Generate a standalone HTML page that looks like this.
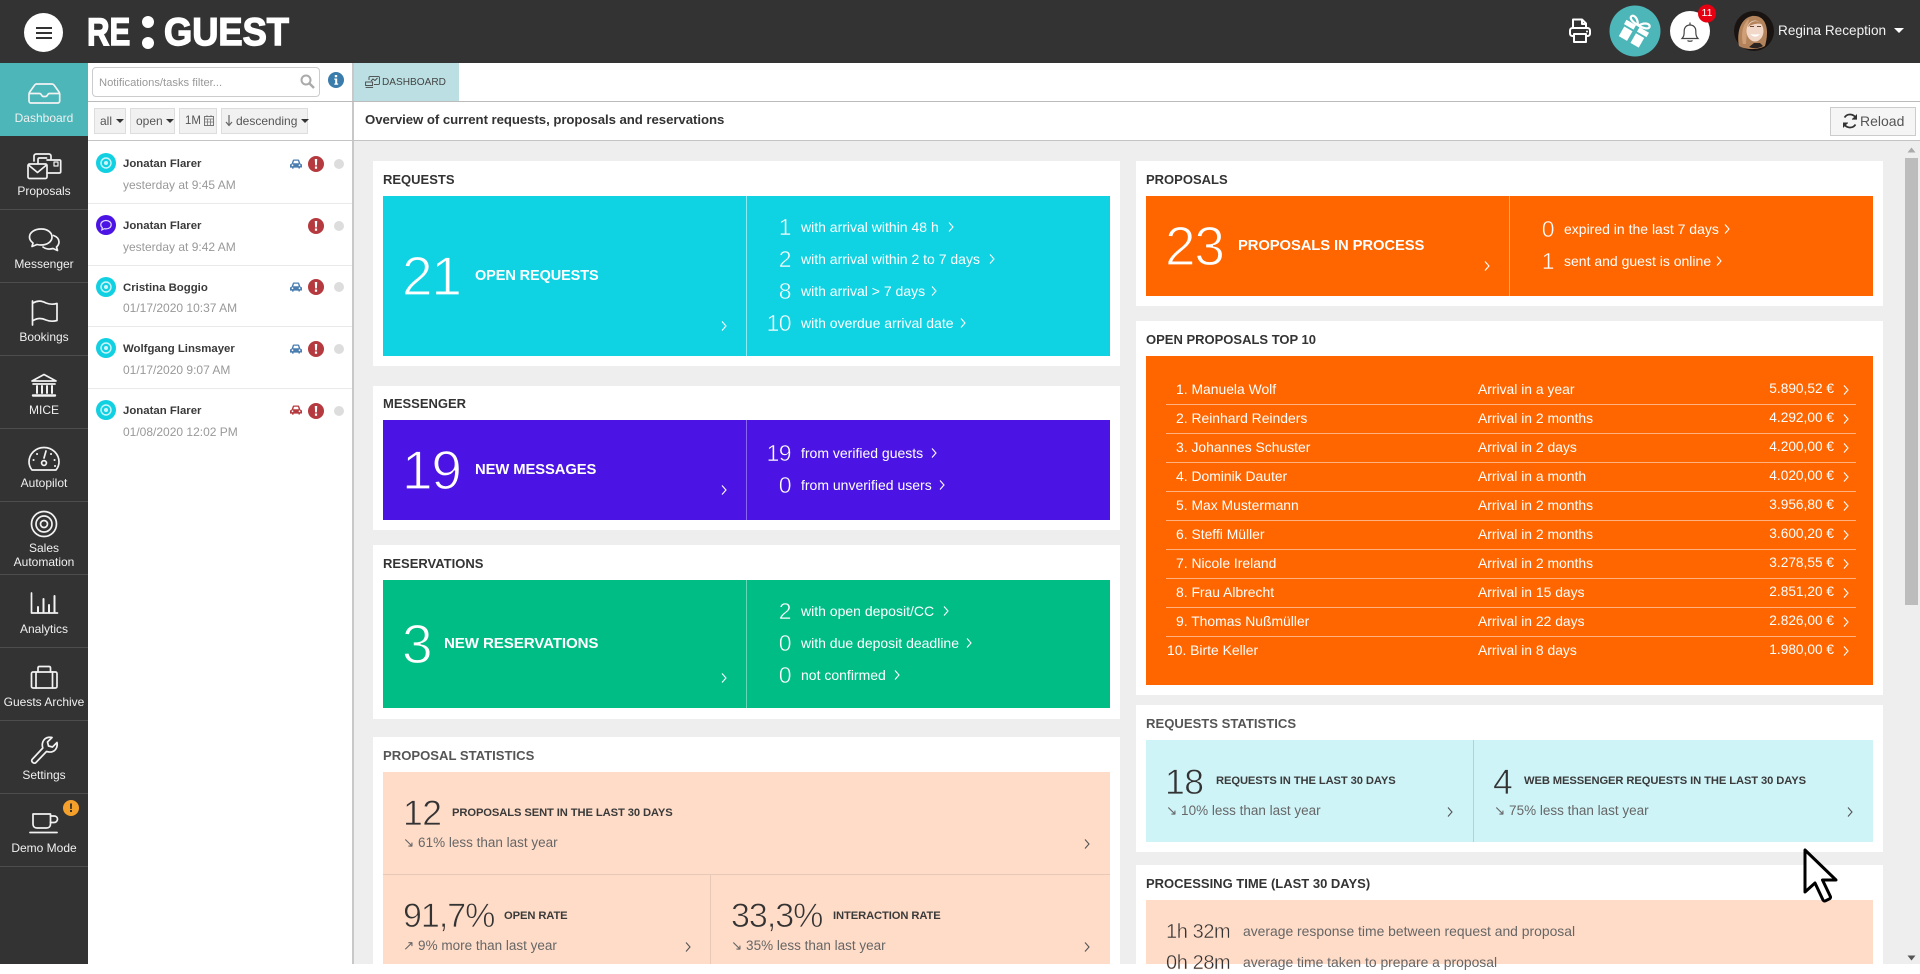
<!DOCTYPE html>
<html lang="en"><head><meta charset="utf-8"><title>RE:GUEST Dashboard</title>
<style>
*{box-sizing:border-box}
html,body{margin:0;padding:0;width:1920px;height:964px;overflow:hidden;background:#fff;font-family:"Liberation Sans",Arial,sans-serif;color:#333}
.b{position:absolute}
.t{position:absolute;white-space:nowrap;line-height:20px;margin-top:-10px}
.r{transform:translateX(-100%)}
.ct{transform:translateX(-50%)}
.bd{font-weight:700}
.card{position:absolute;background:#fff}
.ttl{font-size:13px;font-weight:700;color:#333}
.ttl2{font-size:13.1px;font-weight:700;color:#555}
.nav{font-size:12px;color:#f0f0f0;left:44px;margin-top:-9px}
.sep{position:absolute;left:0;width:88px;height:1px;background:#4d4d4d}
.nm{font-size:11.4px;font-weight:700;left:123px;color:#3a3a3a;margin-top:-9.5px}
.tm{font-size:12px;left:123px;color:#999}
.rowl{position:absolute;left:88px;width:264px;height:1px;background:#e9e9e9}
.btn{position:absolute;top:108px;height:26px;background:#f1f1f1;border:1px solid #ddd;font-size:12px;color:#555;line-height:24px;white-space:nowrap;padding-left:5px}
.w{color:#fff}
.big{font-size:55px;letter-spacing:-1.2px;color:#fff;margin-top:-9px}
.lab{font-size:14.8px;font-weight:700;color:#fff;letter-spacing:-.1px;margin-top:-9px}
.n{font-size:23px;color:#fff;letter-spacing:-.6px}
.s{font-size:14px;color:#fff}
.cy .n{-webkit-text-stroke:.5px #0fd3e3}.cy .big{-webkit-text-stroke:1.2px #0fd3e3}
.pu .n{-webkit-text-stroke:.5px #4b14e4}.pu .big{-webkit-text-stroke:1.2px #4b14e4}
.gr .n{-webkit-text-stroke:.5px #00bd86}.gr .big{-webkit-text-stroke:1.2px #00bd86}
.or .n{-webkit-text-stroke:.5px #ff6600}.or .big{-webkit-text-stroke:1.2px #ff6600}
.row{font-size:13.9px;color:#fff}
.amt{font-size:13.7px}
.hr{position:absolute;left:1166px;width:690px;height:1px;background:#ffb27f}
.sn{font-size:35.5px;color:#333;letter-spacing:-.5px;-webkit-text-stroke:.7px #ffdcc8}
.sc{-webkit-text-stroke:.7px #cff4f8}
.sl{font-size:11.2px;font-weight:700;color:#3a3a3a;letter-spacing:-.1px}
.ss{font-size:13.5px;color:#666}
.pt{font-size:13.9px;color:#666;margin-top:-9px}
svg.ic{position:absolute;overflow:visible}
</style></head><body>
<svg width="0" height="0" style="position:absolute"><defs>
<symbol id="c" viewBox="0 0 6 10"><path d="M1 .5 5 5 1 9.5" fill="none" stroke="currentColor" stroke-width="1.1"/></symbol>
<symbol id="car" viewBox="0 0 12 10"><path d="M0 5.5 1.6 4.6 2.7 1.4C2.9.8 3.4.5 4 .5h4c.6 0 1.1.3 1.3.9l1.1 3.2 1.6.9v3H10v1H8.4V8.600H3.600v1H2v-1H0zM3.300 4.300h5.400L8 1.800H4zM2.500 7.200a.9.9 0 1 0 0-1.800.9.9 0 0 0 0 1.800zm7 0a.9.9 0 1 0 0-1.800.9.9 0 0 0 0 1.800z" fill="currentColor" fill-rule="evenodd"/></symbol>
<symbol id="al" viewBox="0 0 16 16"><circle cx="8" cy="8" r="8" fill="#b53a3f"/><path d="M6.800 3h2.400l-.3 6.400H7.100zM6.900 10.500h2.200v2.200H6.900z" fill="#fff"/></symbol>
<symbol id="ti" viewBox="0 0 20 20"><circle cx="10" cy="10" r="10" fill="#11d0e2"/><circle cx="10" cy="10" r="5" fill="none" stroke="#cdf5f9" stroke-width="1.4"/><circle cx="10" cy="10" r="2" fill="#cdf5f9"/></symbol>
</defs></svg>

<!-- content bg -->
<div class="b" style="left:353px;top:141px;width:1567px;height:823px;background:#eee"></div>

<!-- header -->
<div class="b" style="left:0;top:0;width:1920px;height:63px;background:#333"></div>
<div class="b" style="left:24px;top:13px;width:39px;height:39px;border-radius:50%;background:#fff"></div>
<div class="b" style="left:36px;top:27px;width:16px;height:2px;background:#333"></div>
<div class="b" style="left:36px;top:32px;width:16px;height:2px;background:#333"></div>
<div class="b" style="left:36px;top:37px;width:16px;height:2px;background:#333"></div>
<div class="t bd" style="left:87px;top:33px;font-size:39px;color:#fff;-webkit-text-stroke:1.4px #fff;transform:scaleX(.8);transform-origin:left;line-height:40px;margin-top:-20px">RE</div>
<div class="b" style="left:142px;top:16px;width:12px;height:12px;border-radius:50%;background:#fff"></div>
<div class="b" style="left:142px;top:37px;width:12px;height:12px;border-radius:50%;background:#fff"></div>
<div class="t bd" style="left:164px;top:33px;font-size:39px;color:#fff;-webkit-text-stroke:1.4px #fff;transform:scaleX(.93);transform-origin:left;line-height:40px;margin-top:-20px">GUEST</div>

<svg class="ic" style="left:1560px;top:0" width="360" height="63" viewBox="1560 0 360 63">
<g fill="none" stroke="#fff" stroke-width="2" stroke-linejoin="round">
<path d="M1573 28v-8.500h9l4 4V28"/><path d="M1582 20v4h4"/><path d="M1575 36h-2.500c-1.500 0-2.500-1-2.500-2.500v-3c0-1.500 1-2.500 2.500-2.500h15c1.500 0 2.500 1 2.500 2.500v3c0 1.500-1 2.500-2.500 2.500H1585"/><path d="M1574 34h12v8h-12z"/>
</g>
<circle cx="1587" cy="31.500" r="1" fill="#fff"/>
<circle cx="1635" cy="31" r="25.500" fill="#4db6b9"/>
<g fill="#fff" transform="rotate(30 1635 31)"><path d="M1622 25.500h11v5h-11zM1637 25.500h11v5h-11zM1623.500 32.500h9.500v11h-9.500zM1637 32.500h9.500v11h-9.500z"/><path d="M1634.500 24.500c-3-6-9-7.500-10-4.500-.8 2.800 4 4.500 10 4.500zm1 0c3-6 9-7.500 10-4.500.8 2.800-4 4.500-10 4.500z" fill="none" stroke="#fff" stroke-width="2.200"/></g>
<circle cx="1690" cy="31" r="20" fill="#fff"/>
<path d="M1682 38.500c2-2 2.200-4 2.200-7.500 0-3.500 2.300-6 5.800-6s5.800 2.500 5.800 6c0 3.500.2 5.500 2.200 7.500z" fill="none" stroke="#444" stroke-width="1.200"/><path d="M1690 22.500v2.500" stroke="#444" stroke-width="1.200"/><path d="M1687.500 40.500c.8 1 4.200 1 5 0" fill="none" stroke="#444" stroke-width="1.200"/>
<circle cx="1707" cy="13.500" r="9" fill="#e60012"/>
<circle cx="1754" cy="31" r="20" fill="#191412"/>
<path d="M1739 46c-2-9-1-27 13-30 12-1 15 9 15 17 0 5-1 9-2 13-7 4-19 4-26 0z" fill="#b3845c"/>
<path d="M1743 44c-2-8-1-20 6-25l-2 11-1 14z" fill="#cfa078"/>
<ellipse cx="1755" cy="31" rx="8.500" ry="10.500" fill="#f2d8c8"/>
<path d="M1748 27c2-6 9-8 14-3-4-1-10 0-14 3z" fill="#b5845a"/>
<path d="M1750 26.500h4M1757 26.500h4" stroke="#6d4a36" stroke-width="1"/>
<path d="M1750.500 34c2.500 3.500 7 3.500 9.500 0-3 .6-6.500 .6-9.500 0z" fill="#fff"/>
<path d="M1749 47l5-4 6 0 3 3c-4 2.500-10 3-14 1z" fill="#2a2320"/>
<path d="M1894 28h10l-5 5z" fill="#fff"/>
</svg>
<div class="t ct" style="left:1707px;top:13px;font-size:10.500px;color:#fff">11</div>
<div class="t" style="left:1778px;top:31px;font-size:13.600px;color:#f2f2f2">Regina Reception</div>

<!-- sidebar -->
<div class="b" style="left:0;top:63px;width:88px;height:901px;background:#333"></div>
<div class="b" style="left:0;top:63px;width:88px;height:73px;background:#4db6b9"></div>
<div class="sep" style="top:209px"></div><div class="sep" style="top:282px"></div><div class="sep" style="top:355px"></div><div class="sep" style="top:428px"></div><div class="sep" style="top:501px"></div><div class="sep" style="top:574px"></div><div class="sep" style="top:647px"></div><div class="sep" style="top:720px"></div><div class="sep" style="top:793px"></div><div class="sep" style="top:866px"></div>

<svg class="ic" style="left:0;top:0" width="88" height="964" viewBox="0 0 88 964">
<g fill="none" stroke="#f2f2f2" stroke-width="1.700" stroke-linejoin="round" stroke-linecap="round">
<path d="M36 84h16c.8 0 1.500.4 2 1l5 7c.5.700.7 1.300.7 2v7c0 1.200-1 2-2 2H31c-1 0-2-.8-2-2v-7c0-.700.2-1.300.7-2l5-7c.5-.6 1.200-1 2-1z"/><path d="M30 93.500h9.500c1 0 1.500.6 2 1.500.5 1 1 1.500 2 1.500h2c1 0 1.500-.5 2-1.500.5-.9 1-1.500 2-1.500H59"/>
<path d="M34 161v-5c0-1 1-2 2-2h13c1 0 2 1 2 2v3"/><path d="M38 163v-3.500c0-.8.500-1.500 1.500-1.500h7"/><path d="M47 160h12.500c.8 0 1.200.5 1.200 1.200v10.600c0 .8-.5 1.200-1.200 1.200H47"/><rect x="54" y="162" width="4" height="4" stroke-width="1.200"/><rect x="28" y="164" width="19" height="14.500" rx="1.500"/><path d="M28.500 165l9 7.500 9-7.500"/>
<path d="M41 229c-6.500 0-11.500 3.500-11.500 8 0 2.500 1.500 4.500 3.500 6l-1 3.500 5-2c1.300.4 2.800.5 4 .5 6.500 0 11-3.500 11-8s-4.500-8-10.500-8z"/><path d="M53.500 235.500c3.500 1.200 5.500 3.700 5.500 6.500 0 2-1.200 3.800-2.500 5l1 3.500-4.500-2c-3.500 1-7.500.5-10-1.500"/>
<path d="M32.500 301v24"/><path d="M33 303c5-3 9-2 13 0 4 1.600 7 1.600 11 .5v17c-4 1.200-7 1-11-.5-4-2-8-2.500-13 .5"/>
<path d="M44 374.500 32 381h24z"/><path d="M33 384h22"/><path d="M37 386v7M42 386v7M47 386v7M52 386v7" stroke-width="2"/><path d="M33 395.500h22" stroke-width="2.400"/>
<path d="M32 470c-2-2.500-3-5-3-8 0-8 6.500-14.500 15-14.500S59 454 59 462c0 3-1 5.500-3 8z"/><path d="M44 458l2-7" /><circle cx="44" cy="463" r="2.400"/><path d="M33.500 460h.1M37 454h.1M51 454h.1M54.500 460h.1M55 466h.1" stroke-width="2"/>
<circle cx="44" cy="524" r="12.500"/><circle cx="44" cy="524" r="8"/><circle cx="44" cy="524" r="3.500"/>
<path d="M31.500 593v20h26" /><path d="M38 612v-5M43.500 612v-13M49 612v-7M54.500 612v-16" stroke-width="2"/>
<rect x="31.500" y="672" width="25.500" height="16" rx="1.500"/><path d="M38 672v-4c0-1 .7-1.500 1.500-1.500h9.500c.8 0 1.500.5 1.500 1.500v4"/><path d="M36 672v16M52.500 672v16"/>
<path d="M32.500 759c-1.500 1.500-.5 3 .3 3.500.8.800 2.200 1 3.200 0l10.500-11c3.500 1 7 .5 9-2 1.500-2 2-4.500 1.500-7l-4.500 4.500-4-1-1-4 4.500-4.500c-2.500-.5-5.500 0-7.500 1.800-2 2.200-2.700 5.500-1.700 8.700z"/>
<path d="M33 814h17.500v10c0 2.500-1.500 4-4 4H37c-2.500 0-4-1.500-4-4z"/><path d="M50.500 816h3.500c2 0 3.500 1.300 3.500 3 0 2-1.500 3.500-3.500 3.500h-3.500"/><path d="M30 832.500h27" stroke-width="1.800"/>
</g>
<circle cx="71" cy="808" r="8" fill="#f5a02a"/><path d="M70 803.500h2l-.2 5.500h-1.600zM70 810h2v2h-2z" fill="#333"/>
</svg>
<div class="t nav ct" style="top:117px">Dashboard</div>
<div class="t nav ct" style="top:190px">Proposals</div>
<div class="t nav ct" style="top:263px">Messenger</div>
<div class="t nav ct" style="top:336px">Bookings</div>
<div class="t nav ct" style="top:409px">MICE</div>
<div class="t nav ct" style="top:482px">Autopilot</div>
<div class="t nav ct" style="top:547px">Sales</div>
<div class="t nav ct" style="top:561px">Automation</div>
<div class="t nav ct" style="top:628px">Analytics</div>
<div class="t nav ct" style="top:701px">Guests Archive</div>
<div class="t nav ct" style="top:774px">Settings</div>
<div class="t nav ct" style="top:847px">Demo Mode</div>

<!-- left panel -->
<div class="b" style="left:352px;top:63px;width:2px;height:901px;background:#c8c8c8"></div>
<div class="b" style="left:88px;top:101px;width:1832px;height:1px;background:#bbb"></div>
<div class="b" style="left:88px;top:140px;width:1832px;height:1px;background:#c4c4c4"></div>
<div class="b" style="left:92px;top:67px;width:228px;height:30px;border:1px solid #ccc;border-radius:4px;background:#fff"></div>
<div class="t" style="left:99px;top:83px;font-size:11.200px;color:#999">Notifications/tasks filter...</div>
<svg class="ic" style="left:300px;top:74px" width="15" height="15"><circle cx="6" cy="6" r="4.500" fill="none" stroke="#aaa" stroke-width="2"/><path d="M9.500 9.500 14 14" stroke="#aaa" stroke-width="2.400"/></svg>
<svg class="ic" style="left:328px;top:72px" width="16" height="16"><circle cx="8" cy="8" r="8" fill="#3a7cab"/><path d="M6.800 3h2.400v2.300H6.800zM6.300 6.500h2.900v5h1v1.300H6.300v-1.300h.9V7.800h-.9z" fill="#fff"/></svg>
<div class="b" style="left:354px;top:63px;width:105px;height:38px;background:#bbdfe2"></div>
<svg class="ic" style="left:365px;top:76px" width="15" height="12" fill="none" stroke="#444" stroke-width=".9"><path d="M4 4V1.500C4 1 4.400.6 5 .6h8.500c.5 0 .9.400.9.900v6c0 .5-.4.900-.9.900H9"/><path d="M6 5l2-2 2 1.500 2.500-2.500"/><rect x=".6" y="6" width="7" height="3.500"/><path d="M.6 11.400h7.500"/></svg>
<div class="t" style="left:382px;top:83px;font-size:10.100px;color:#444">DASHBOARD</div>

<div class="btn" style="left:94px;width:32px">all <span style="display:inline-block;border:4px solid transparent;border-top:4px solid #333;border-bottom:0;margin-left:1px;vertical-align:2px;border-left-width:4px"></span></div>
<div class="btn" style="left:130px;width:45px;">open <span style="display:inline-block;border:4px solid transparent;border-top:4px solid #333;border-bottom:0;vertical-align:2px"></span></div>
<div class="btn" style="left:179px;width:38px;font-size:11.500px">1M</div>
<svg class="ic" style="left:204px;top:115px" width="10" height="11" fill="none" stroke="#777"><rect x=".5" y="1.500" width="9" height="9"/><path d="M.5 4h9M3.500 4v6.500M6.500 4v6.500M.5 7h9M3 0v2M7 0v2" stroke-width=".8"/></svg>
<div class="btn" style="left:221px;width:87px;padding-left:14px">descending <span style="display:inline-block;border:4px solid transparent;border-top:4px solid #333;border-bottom:0;vertical-align:2px"></span></div>
<svg class="ic" style="left:225px;top:115px" width="8" height="12" fill="none" stroke="#666" stroke-width="1.200"><path d="M4 0v10M1 7 4 10.500 7 7"/></svg>

<div class="rowl" style="top:203px"></div><div class="rowl" style="top:265px"></div><div class="rowl" style="top:326px"></div><div class="rowl" style="top:388px"></div>

<svg class="ic" style="left:96px;top:153px" width="20" height="20"><use href="#ti"/></svg>
<svg class="ic" style="left:96px;top:215px" width="20" height="20"><circle cx="10" cy="10" r="10" fill="#4b14e4"/><path d="M10 5.500c-3 0-5.200 1.900-5.200 4.200 0 1.200.6 2.200 1.500 3l-.5 2.200 2.500-1.200c.6.100 1.100.2 1.700.2 3 0 5.200-1.900 5.200-4.200S13 5.500 10 5.500z" fill="none" stroke="#e4dcff" stroke-width="1.200"/></svg>
<svg class="ic" style="left:96px;top:277px" width="20" height="20"><use href="#ti"/></svg>
<svg class="ic" style="left:96px;top:338px" width="20" height="20"><use href="#ti"/></svg>
<svg class="ic" style="left:96px;top:400px" width="20" height="20"><use href="#ti"/></svg>
<div class="t nm" style="top:163px">Jonatan Flarer</div><div class="t tm" style="top:185px">yesterday at 9:45 AM</div>
<div class="t nm" style="top:225px">Jonatan Flarer</div><div class="t tm" style="top:247px">yesterday at 9:42 AM</div>
<div class="t nm" style="top:287px">Cristina Boggio</div><div class="t tm" style="top:308px">01/17/2020 10:37 AM</div>
<div class="t nm" style="top:348px">Wolfgang Linsmayer</div><div class="t tm" style="top:370px">01/17/2020 9:07 AM</div>
<div class="t nm" style="top:410px">Jonatan Flarer</div><div class="t tm" style="top:432px">01/08/2020 12:02 PM</div>

<svg class="ic" style="left:290px;top:159px;color:#4a7eb0" width="12" height="10"><use href="#car"/></svg>
<svg class="ic" style="left:290px;top:282px;color:#4a7eb0" width="12" height="10"><use href="#car"/></svg>
<svg class="ic" style="left:290px;top:344px;color:#4a7eb0" width="12" height="10"><use href="#car"/></svg>
<svg class="ic" style="left:290px;top:405px;color:#b53a3f" width="12" height="10"><use href="#car"/></svg>
<svg class="ic" style="left:308px;top:156px" width="16" height="16"><use href="#al"/></svg>
<svg class="ic" style="left:308px;top:218px" width="16" height="16"><use href="#al"/></svg>
<svg class="ic" style="left:308px;top:279px" width="16" height="16"><use href="#al"/></svg>
<svg class="ic" style="left:308px;top:341px" width="16" height="16"><use href="#al"/></svg>
<svg class="ic" style="left:308px;top:403px" width="16" height="16"><use href="#al"/></svg>
<div class="b" style="left:334px;top:159px;width:10px;height:10px;border-radius:50%;background:#ddd"></div>
<div class="b" style="left:334px;top:221px;width:10px;height:10px;border-radius:50%;background:#ddd"></div>
<div class="b" style="left:334px;top:282px;width:10px;height:10px;border-radius:50%;background:#ddd"></div>
<div class="b" style="left:334px;top:344px;width:10px;height:10px;border-radius:50%;background:#ddd"></div>
<div class="b" style="left:334px;top:406px;width:10px;height:10px;border-radius:50%;background:#ddd"></div>

<!-- title bar -->
<div class="b" style="left:354px;top:102px;width:1566px;height:38px;background:#fff"></div>
<div class="t bd" style="left:365px;top:120px;font-size:13.200px;color:#333;letter-spacing:-.05px">Overview of current requests, proposals and reservations</div>
<div class="b" style="left:1830px;top:107px;width:86px;height:29px;background:#f5f5f5;border:1px solid #ccc"></div>
<svg class="ic" style="left:1842px;top:113px" width="16" height="16" fill="none" stroke="#333" stroke-width="1.700"><path d="M14 5.500A6.500 6.500 0 0 0 2.500 4.500"/><path d="M14.500 1.500v4.600H10" fill="#333" stroke-width="1"/><path d="M2 10.500a6.500 6.500 0 0 0 11.500 1"/><path d="M1.500 14.500V10H6" fill="#333" stroke-width="1"/></svg>
<div class="t" style="left:1860px;top:121px;font-size:14px;color:#555">Reload</div>

<!-- scrollbar -->
<div class="b" style="left:1905px;top:158px;width:13px;height:447px;background:#bcbcbc"></div>
<svg class="ic" style="left:1907px;top:147px" width="9" height="6"><path d="M.5 5.500 4.500.5l4 5z" fill="#aaa"/></svg>
<svg class="ic" style="left:1907px;top:955px" width="9" height="6"><path d="M.5.500l4 5 4-5z" fill="#555"/></svg>

<!-- REQUESTS -->
<div class="card" style="left:373px;top:161px;width:747px;height:205px"></div>
<div class="t ttl" style="left:383px;top:180px">REQUESTS</div>
<div class="cy">
<div class="b" style="left:383px;top:196px;width:727px;height:160px;background:#0fd3e3"></div>
<div class="b" style="left:746px;top:196px;width:1px;height:160px;background:#8fe9f1"></div>
<div class="t big" style="left:402px;top:275px">21</div>
<div class="t lab" style="left:475px;top:275px;font-size:14.500px">OPEN REQUESTS</div>
<div class="t n r" style="left:791px;top:227px">1</div><div class="t s" style="left:801px;top:227px">with arrival within 48 h</div>
<div class="t n r" style="left:791px;top:259px">2</div><div class="t s" style="left:801px;top:259px">with arrival within 2 to 7 days</div>
<div class="t n r" style="left:791px;top:291px">8</div><div class="t s" style="left:801px;top:291px">with arrival &gt; 7 days</div>
<div class="t n r" style="left:791px;top:323px">10</div><div class="t s" style="left:801px;top:323px">with overdue arrival date</div>
</div>
<svg class="ic w" style="left:721px;top:321px" width="6" height="10"><use href="#c"/></svg>
<svg class="ic w" style="left:948px;top:222px" width="6" height="10"><use href="#c"/></svg>
<svg class="ic w" style="left:989px;top:254px" width="6" height="10"><use href="#c"/></svg>
<svg class="ic w" style="left:931px;top:286px" width="6" height="10"><use href="#c"/></svg>
<svg class="ic w" style="left:960px;top:318px" width="6" height="10"><use href="#c"/></svg>

<!-- MESSENGER -->
<div class="card" style="left:373px;top:386px;width:747px;height:144px"></div>
<div class="t ttl" style="left:383px;top:404px">MESSENGER</div>
<div class="pu">
<div class="b" style="left:383px;top:420px;width:727px;height:100px;background:#4b14e4"></div>
<div class="b" style="left:746px;top:420px;width:1px;height:100px;background:#8a66ee"></div>
<div class="t big" style="left:402px;top:469px">19</div>
<div class="t lab" style="left:475px;top:469px">NEW MESSAGES</div>
<div class="t n r" style="left:791px;top:453px">19</div><div class="t s" style="left:801px;top:453px">from verified guests</div>
<div class="t n r" style="left:791px;top:485px">0</div><div class="t s" style="left:801px;top:485px">from unverified users</div>
</div>
<svg class="ic w" style="left:721px;top:485px" width="6" height="10"><use href="#c"/></svg>
<svg class="ic w" style="left:931px;top:448px" width="6" height="10"><use href="#c"/></svg>
<svg class="ic w" style="left:939px;top:480px" width="6" height="10"><use href="#c"/></svg>

<!-- RESERVATIONS -->
<div class="card" style="left:373px;top:545px;width:747px;height:174px"></div>
<div class="t ttl" style="left:383px;top:564px">RESERVATIONS</div>
<div class="gr">
<div class="b" style="left:383px;top:580px;width:727px;height:128px;background:#00bd86"></div>
<div class="b" style="left:746px;top:580px;width:1px;height:128px;background:#66d7b6"></div>
<div class="t big" style="left:402px;top:643px">3</div>
<div class="t lab" style="left:444px;top:643px;font-size:15.100px">NEW RESERVATIONS</div>
<div class="t n r" style="left:791px;top:611px">2</div><div class="t s" style="left:801px;top:611px">with open deposit/CC</div>
<div class="t n r" style="left:791px;top:643px">0</div><div class="t s" style="left:801px;top:643px">with due deposit deadline</div>
<div class="t n r" style="left:791px;top:675px">0</div><div class="t s" style="left:801px;top:675px">not confirmed</div>
</div>
<svg class="ic w" style="left:721px;top:673px" width="6" height="10"><use href="#c"/></svg>
<svg class="ic w" style="left:943px;top:606px" width="6" height="10"><use href="#c"/></svg>
<svg class="ic w" style="left:966px;top:638px" width="6" height="10"><use href="#c"/></svg>
<svg class="ic w" style="left:894px;top:670px" width="6" height="10"><use href="#c"/></svg>

<!-- PROPOSAL STATISTICS -->
<div class="card" style="left:373px;top:737px;width:747px;height:227px"></div>
<div class="t ttl2" style="left:383px;top:756px">PROPOSAL STATISTICS</div>
<div class="b" style="left:383px;top:772px;width:727px;height:192px;background:#ffdcc8"></div>
<div class="b" style="left:383px;top:874px;width:727px;height:1px;background:#e8c8b6"></div>
<div class="b" style="left:710px;top:874px;width:1px;height:90px;background:#e8c8b6"></div>
<div class="t sn" style="left:403px;top:813px">12</div>
<div class="t sl" style="left:452px;top:813px">PROPOSALS SENT IN THE LAST 30 DAYS</div>
<div class="t ss" style="left:403px;top:843px">↘ 61% less than last year</div>
<svg class="ic" style="left:1084px;top:839px;color:#555" width="6" height="10"><use href="#c"/></svg>
<div class="t sn" style="left:403px;top:916px;letter-spacing:-1px;font-size:34px">91,7%</div>
<div class="t sl" style="left:504px;top:916px">OPEN RATE</div>
<div class="t ss" style="left:403px;top:946px">↗ 9% more than last year</div>
<svg class="ic" style="left:685px;top:942px;color:#555" width="6" height="10"><use href="#c"/></svg>
<div class="t sn" style="left:731px;top:916px;letter-spacing:-1px;font-size:34px">33,3%</div>
<div class="t sl" style="left:833px;top:916px">INTERACTION RATE</div>
<div class="t ss" style="left:731px;top:946px">↘ 35% less than last year</div>
<svg class="ic" style="left:1084px;top:942px;color:#555" width="6" height="10"><use href="#c"/></svg>

<!-- PROPOSALS -->
<div class="card" style="left:1136px;top:161px;width:747px;height:145px"></div>
<div class="t ttl" style="left:1146px;top:180px">PROPOSALS</div>
<div class="or">
<div class="b" style="left:1146px;top:196px;width:727px;height:100px;background:#ff6600"></div>
<div class="b" style="left:1509px;top:196px;width:1px;height:100px;background:#ffa366"></div>
<div class="t big" style="left:1165px;top:245px">23</div>
<div class="t lab" style="left:1238px;top:245px">PROPOSALS IN PROCESS</div>
<div class="t n r" style="left:1554px;top:229px">0</div><div class="t s" style="left:1564px;top:229px">expired in the last 7 days</div>
<div class="t n r" style="left:1554px;top:261px">1</div><div class="t s" style="left:1564px;top:261px">sent and guest is online</div>
</div>
<svg class="ic w" style="left:1484px;top:261px" width="6" height="10"><use href="#c"/></svg>
<svg class="ic w" style="left:1724px;top:224px" width="6" height="10"><use href="#c"/></svg>
<svg class="ic w" style="left:1716px;top:256px" width="6" height="10"><use href="#c"/></svg>

<!-- TOP 10 -->
<div class="card" style="left:1136px;top:321px;width:747px;height:374px"></div>
<div class="t ttl" style="left:1146px;top:340px">OPEN PROPOSALS TOP 10</div>
<div class="b" style="left:1146px;top:356px;width:727px;height:329px;background:#ff6600"></div>
<div class="hr" style="top:404px"></div><div class="hr" style="top:433px"></div><div class="hr" style="top:462px"></div><div class="hr" style="top:491px"></div><div class="hr" style="top:520px"></div><div class="hr" style="top:549px"></div><div class="hr" style="top:578px"></div><div class="hr" style="top:607px"></div><div class="hr" style="top:636px"></div>

<div class="t row" style="left:1176px;top:389px">1. Manuela Wolf</div><div class="t row" style="left:1478px;top:389px">Arrival in a year</div><div class="t row amt r" style="left:1834px;top:389px">5.890,52 €</div>
<div class="t row" style="left:1176px;top:418px">2. Reinhard Reinders</div><div class="t row" style="left:1478px;top:418px">Arrival in 2 months</div><div class="t row amt r" style="left:1834px;top:418px">4.292,00 €</div>
<div class="t row" style="left:1176px;top:447px">3. Johannes Schuster</div><div class="t row" style="left:1478px;top:447px">Arrival in 2 days</div><div class="t row amt r" style="left:1834px;top:447px">4.200,00 €</div>
<div class="t row" style="left:1176px;top:476px">4. Dominik Dauter</div><div class="t row" style="left:1478px;top:476px">Arrival in a month</div><div class="t row amt r" style="left:1834px;top:476px">4.020,00 €</div>
<div class="t row" style="left:1176px;top:505px">5. Max Mustermann</div><div class="t row" style="left:1478px;top:505px">Arrival in 2 months</div><div class="t row amt r" style="left:1834px;top:505px">3.956,80 €</div>
<div class="t row" style="left:1176px;top:534px">6. Steffi Müller</div><div class="t row" style="left:1478px;top:534px">Arrival in 2 months</div><div class="t row amt r" style="left:1834px;top:534px">3.600,20 €</div>
<div class="t row" style="left:1176px;top:563px">7. Nicole Ireland</div><div class="t row" style="left:1478px;top:563px">Arrival in 2 months</div><div class="t row amt r" style="left:1834px;top:563px">3.278,55 €</div>
<div class="t row" style="left:1176px;top:592px">8. Frau Albrecht</div><div class="t row" style="left:1478px;top:592px">Arrival in 15 days</div><div class="t row amt r" style="left:1834px;top:592px">2.851,20 €</div>
<div class="t row" style="left:1176px;top:621px">9. Thomas Nußmüller</div><div class="t row" style="left:1478px;top:621px">Arrival in 22 days</div><div class="t row amt r" style="left:1834px;top:621px">2.826,00 €</div>
<div class="t row" style="left:1167px;top:650px">10. Birte Keller</div><div class="t row" style="left:1478px;top:650px">Arrival in 8 days</div><div class="t row amt r" style="left:1834px;top:650px">1.980,00 €</div>
<svg class="ic w" style="left:1843px;top:385px" width="6" height="10"><use href="#c"/></svg>
<svg class="ic w" style="left:1843px;top:414px" width="6" height="10"><use href="#c"/></svg>
<svg class="ic w" style="left:1843px;top:443px" width="6" height="10"><use href="#c"/></svg>
<svg class="ic w" style="left:1843px;top:472px" width="6" height="10"><use href="#c"/></svg>
<svg class="ic w" style="left:1843px;top:501px" width="6" height="10"><use href="#c"/></svg>
<svg class="ic w" style="left:1843px;top:530px" width="6" height="10"><use href="#c"/></svg>
<svg class="ic w" style="left:1843px;top:559px" width="6" height="10"><use href="#c"/></svg>
<svg class="ic w" style="left:1843px;top:588px" width="6" height="10"><use href="#c"/></svg>
<svg class="ic w" style="left:1843px;top:617px" width="6" height="10"><use href="#c"/></svg>
<svg class="ic w" style="left:1843px;top:646px" width="6" height="10"><use href="#c"/></svg>

<!-- REQUESTS STATISTICS -->
<div class="card" style="left:1136px;top:705px;width:747px;height:147px"></div>
<div class="t ttl2" style="left:1146px;top:724px">REQUESTS STATISTICS</div>
<div class="b" style="left:1146px;top:740px;width:727px;height:102px;background:#cff4f8"></div>
<div class="b" style="left:1473px;top:740px;width:1px;height:102px;background:#a8d6db"></div>
<div class="t sn sc" style="left:1165px;top:782px">18</div>
<div class="t sl" style="left:1216px;top:781px">REQUESTS IN THE LAST 30 DAYS</div>
<div class="t ss" style="left:1166px;top:811px">↘ 10% less than last year</div>
<svg class="ic" style="left:1447px;top:807px;color:#555" width="6" height="10"><use href="#c"/></svg>
<div class="t sn sc" style="left:1493px;top:782px">4</div>
<div class="t sl" style="left:1524px;top:781px">WEB MESSENGER REQUESTS IN THE LAST 30 DAYS</div>
<div class="t ss" style="left:1494px;top:811px">↘ 75% less than last year</div>
<svg class="ic" style="left:1847px;top:807px;color:#555" width="6" height="10"><use href="#c"/></svg>

<!-- PROCESSING TIME -->
<div class="card" style="left:1136px;top:865px;width:747px;height:99px"></div>
<div class="t ttl" style="left:1146px;top:884px">PROCESSING TIME (LAST 30 DAYS)</div>
<div class="b" style="left:1146px;top:900px;width:727px;height:64px;background:#ffdcc8"></div>
<div class="t" style="left:1166px;top:932px;font-size:20px;-webkit-text-stroke:.4px #ffdcc8;letter-spacing:-.4px">1h 32m</div>
<div class="t pt" style="left:1243px;top:930px">average response time between request and proposal</div>
<div class="t" style="left:1166px;top:963px;font-size:20px;-webkit-text-stroke:.4px #ffdcc8;letter-spacing:-.4px">0h 28m</div>
<div class="t pt" style="left:1243px;top:961px">average time taken to prepare a proposal</div>

<!-- cursor -->
<svg class="ic" style="left:1800px;top:846px" width="42" height="60" viewBox="0 0 42 60"><path d="M5 4v42l10-9 8 17c.5 1 1.500 1.300 2.500.8l4-2c1-.5 1.300-1.500.8-2.500L22.500 34H36z" fill="#fff" stroke="#000" stroke-width="3" stroke-linejoin="round"/></svg>
</body></html>
